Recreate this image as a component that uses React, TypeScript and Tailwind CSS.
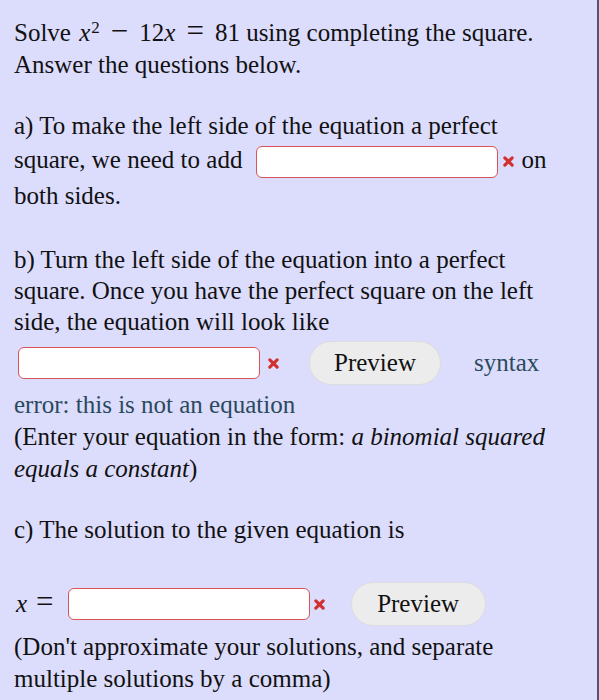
import React from 'react'

function Cross() {
  return (
    <svg viewBox="0 0 12 12" className="h-[11px] w-[11px]" aria-hidden>
      <path d="M2 2 L10 10 M10 2 L2 10" stroke="#d32f2f" strokeWidth="3.4" strokeLinecap="round" />
    </svg>
  )
}

function Field({ className = '' }: { className?: string }) {
  return (
    <div className={`h-[32px] w-[242px] shrink-0 rounded-[6px] border-[1.5px] border-[#d9535a] bg-white ${className}`} />
  )
}

function Preview({ className = '' }: { className?: string }) {
  return (
    <div className={`flex h-[44px] shrink-0 items-center justify-center rounded-full border border-[#dcdce0] bg-[#ececec] text-[#111] ${className}`}>
      Preview
    </div>
  )
}

// math operators are a touch wider than the body font
function Op({ children }: { children: React.ReactNode }) {
  return <span className="mx-[11px] inline-block text-[31px] leading-[20px]">{children}</span>
}

export default function App() {
  return (
    <div className="h-[700px] w-[599px] overflow-hidden border-r-[2px] border-[#55556e] bg-[#dcdcfc] pl-[14px] pt-[17px] font-['Liberation_Serif','Times_New_Roman',serif] text-[25px] leading-[32px] text-[#111]">
      {/* question */}
      <div className="h-[32px] whitespace-nowrap">
        Solve <i className="ml-[2px]">x</i>
        <sup className="ml-[1px] text-[17px] not-italic">2</sup>
        <Op>−</Op>12<i>x</i>
        <Op>=</Op>81 using completing the square.
      </div>
      <div>Answer the questions below.</div>

      {/* part a */}
      <div className="mt-[29px]">a) To make the left side of the equation a perfect</div>
      <div className="flex h-[38px] items-center whitespace-nowrap">
        <span className="mt-[-3px]">square, we need to add</span>
        <Field className="ml-[14px] mt-[2px]" />
        <span className="ml-[5px]"><Cross /></span>
        <span className="ml-[7px] mt-[-3px]">on</span>
      </div>
      <div>both sides.</div>

      {/* part b */}
      <div className="mt-[32px] leading-[31px]">
        <div>b) Turn the left side of the equation into a perfect</div>
        <div>square. Once you have the perfect square on the left</div>
        <div>side, the equation will look like</div>
      </div>
      <div className="flex h-[52px] items-center whitespace-nowrap">
        <Field className="ml-[4px]" />
        <span className="ml-[8px]"><Cross /></span>
        <Preview className="ml-[30px] w-[132px]" />
        <span className="ml-[33px] text-[#2a4a5c]">syntax</span>
      </div>
      <div>
        <div className="text-[#2a4a5c]">error: this is not an equation</div>
        <div className="whitespace-nowrap">
          (Enter your equation in the form: <i>a binomial squared</i>
        </div>
        <div>
          <i>equals a constant</i>)
        </div>
      </div>

      {/* part c */}
      <div className="mt-[29px]">c) The solution to the given equation is</div>
      <div className="mt-[36px] flex h-[44px] items-center whitespace-nowrap">
        <span className="ml-[2px]">
          <i>x</i>
          <span className="ml-[9px] inline-block text-[31px] leading-[20px]">=</span>
        </span>
        <Field className="ml-[14px]" />
        <span className="ml-[4px]"><Cross /></span>
        <Preview className="ml-[26px] w-[135px]" />
      </div>
      <div className="mt-[5px]">
        <div>(Don't approximate your solutions, and separate</div>
        <div>multiple solutions by a comma)</div>
      </div>
    </div>
  )
}
